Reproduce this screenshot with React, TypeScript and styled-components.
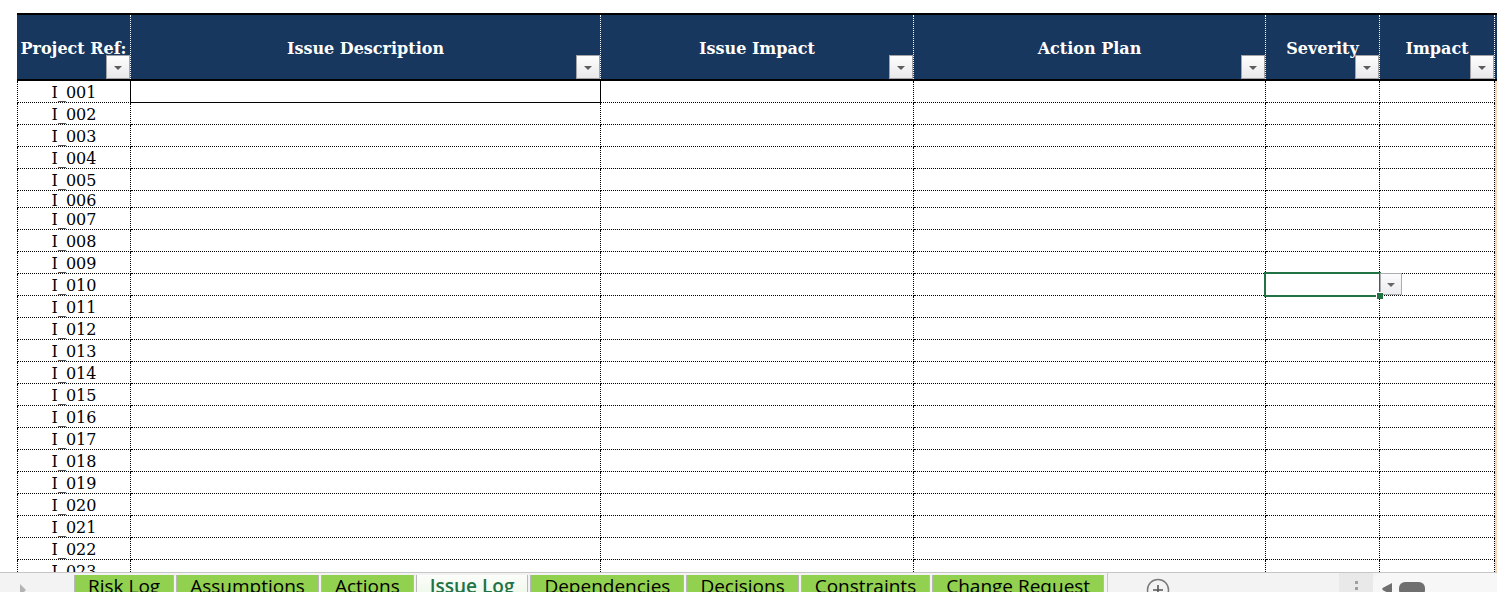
import React from 'react';
import styled, { createGlobalStyle } from 'styled-components';

const GlobalStyle = createGlobalStyle`
  html, body { margin: 0; padding: 0; background: #fff; overflow: hidden; }
  #root { width: 1497px; height: 592px; }
`;

const COLS = '114px 470px 313px 352px 114px 115px 3px';

const Page = styled.div`
  width: 1497px;
  height: 592px;
  display: flex;
  flex-direction: column;
  overflow: hidden;
  background: #fff;
`;

const Sheet = styled.div`
  flex: 1;
  min-height: 0;
  overflow: hidden;
  box-sizing: border-box;
  padding: 13px 0 0 17px;
`;

const HeaderRow = styled.div`
  display: grid;
  grid-template-columns: ${COLS};
  height: 68px;
  box-sizing: border-box;
  border-top: 2px solid #000;
  border-bottom: 2px solid #000;
`;

const HeaderCell = styled.div<{ $edge?: boolean }>`
  position: relative;
  box-sizing: border-box;
  background: #17375e;
  border-right: ${(p) => (p.$edge ? 'none' : '1px dotted #ffffff')};
  display: flex;
  align-items: center;
  justify-content: center;
  padding-top: 2px;
  font: bold 16px 'DejaVu Serif', serif;
  color: #fff;
  white-space: nowrap;
`;

const FilterButton = styled.span`
  position: absolute;
  right: 0;
  bottom: 0;
  width: 24px;
  height: 24px;
  box-sizing: border-box;
  border: 1px solid #a3a3a6;
  background: linear-gradient(#fefefe, #e8e8eb);
  display: flex;
  align-items: center;
  justify-content: center;
  &::after {
    content: '';
    margin-top: 2px;
    border-left: 4px solid transparent;
    border-right: 4px solid transparent;
    border-top: 4px solid #5c5c5c;
  }
`;

const Row = styled.div<{ $h: number }>`
  display: grid;
  grid-template-columns: ${COLS};
  height: ${(p) => p.$h}px;
`;

const Cell = styled.div<{ $first?: boolean; $solidRight?: boolean; $solidBottom?: boolean; $selected?: boolean }>`
  position: ${(p) => (p.$selected ? 'relative' : 'static')};
  box-sizing: border-box;
  border-right: 1px ${(p) => (p.$solidRight ? 'solid' : 'dotted')} #000;
  border-bottom: 1px ${(p) => (p.$solidBottom ? 'solid' : 'dotted')} #000;
  border-left: ${(p) => (p.$first ? '1px dotted #000' : 'none')};
  display: flex;
  align-items: flex-end;
  justify-content: center;
  overflow: ${(p) => (p.$selected ? 'visible' : 'hidden')};
  font: 16px 'DejaVu Serif', serif;
  line-height: 18.6px;
  color: #000;
  white-space: nowrap;
`;

const StripCell = styled.div`
  background: #fcd5b4;
`;

const HeaderStrip = styled.div`
  background: #17375e;
`;

const RefText = styled.span<{ $short?: boolean }>`
  margin-bottom: ${(p) => (p.$short ? '-4px' : '-1px')};
`;

const SelectionBox = styled.div`
  position: absolute;
  top: -2px;
  left: -2px;
  right: -2px;
  bottom: -2px;
  border: 2px solid #217346;
  z-index: 2;
  pointer-events: none;
`;

const FillHandle = styled.div`
  position: absolute;
  right: -4px;
  bottom: -4px;
  width: 6px;
  height: 6px;
  background: #217346;
  border-top: 1px solid #fff;
  border-left: 1px solid #fff;
  z-index: 4;
`;

const CellDropdown = styled.div`
  position: absolute;
  left: calc(100% + 1px);
  top: -1px;
  width: 22px;
  height: 22px;
  box-sizing: border-box;
  border: 1px solid #adadb0;
  background: linear-gradient(#fbfbfd, #ececf0);
  display: flex;
  align-items: center;
  justify-content: center;
  z-index: 3;
  &::after {
    content: '';
    margin-top: 1px;
    border-left: 4px solid transparent;
    border-right: 4px solid transparent;
    border-top: 4px solid #666;
  }
`;

const TabBar = styled.div`
  flex: none;
  height: 20px;
  box-sizing: border-box;
  border-top: 1px solid #c6c6c6;
  background: #f3f3f3;
  display: flex;
  align-items: flex-start;
  overflow: hidden;
`;

const NavArea = styled.div`
  flex: none;
  width: 74px;
  height: 100%;
  display: flex;
  align-items: flex-start;
  padding-left: 20px;
  box-sizing: border-box;
  &::before {
    content: '';
    margin-top: 11px;
    border-top: 6px solid transparent;
    border-bottom: 6px solid transparent;
    border-left: 6px solid #b3b3b3;
  }
`;

const Tabs = styled.div`
  display: flex;
  padding-top: 2px;
`;

const Tab = styled.div<{ $active?: boolean }>`
  height: 24px;
  box-sizing: border-box;
  padding: 0 13px;
  margin-right: 2px;
  border-left: 1px solid #b8b8b8;
  border-right: 1px solid #b8b8b8;
  background: ${(p) => (p.$active ? 'linear-gradient(#fbfdf9, #eef7e8)' : '#92d050')};
  color: ${(p) => (p.$active ? '#217346' : '#000')};
  font: ${(p) => (p.$active ? 600 : 400)} 19px 'Open Sans', sans-serif;
  line-height: 23px;
  white-space: nowrap;
`;

const AddArea = styled.div`
  flex: none;
  height: 100%;
  margin-left: 1px;
  padding: 5px 0 0 38px;
  border-left: 1px solid #c8c8c8;
  box-sizing: border-box;
`;

const RightArea = styled.div`
  margin-left: auto;
  flex: none;
  width: 158px;
  height: 100%;
  display: flex;
`;

const Grip = styled.div`
  width: 34px;
  height: 100%;
  background: #e9e9e9;
  display: flex;
  flex-direction: column;
  align-items: center;
  gap: 3px;
  padding-top: 8px;
  box-sizing: border-box;
`;

const GripDot = styled.span`
  width: 3px;
  height: 3px;
  background: #a0a0a0;
`;

const Track = styled.div`
  flex: 1;
  height: 100%;
  background: #f7f7f7;
  border-top-left-radius: 9px;
  display: flex;
  align-items: flex-start;
  padding: 9px 0 0 8px;
  box-sizing: border-box;
  gap: 6px;
`;

const Thumb = styled.div`
  width: 26px;
  height: 14px;
  border-radius: 6px;
  background: #6f6f6f;
`;

const headers = [
  'Project Ref:',
  'Issue Description',
  'Issue Impact',
  'Action Plan',
  'Severity',
  'Impact',
];

const tabs = [
  'Risk Log',
  'Assumptions',
  'Actions',
  'Issue Log',
  'Dependencies',
  'Decisions',
  'Constraints',
  'Change Request',
];

const rows = Array.from({ length: 24 }, (_, i) => ({
  ref: `I_${String(i + 1).padStart(3, '0')}`,
  h: i === 5 ? 17 : 22,
}));

export default function App() {
  return (
    <Page>
      <GlobalStyle />
      <Sheet>
        <HeaderRow>
          {headers.map((h) => (
            <HeaderCell key={h}>
              {h}
              <FilterButton />
            </HeaderCell>
          ))}
          <HeaderStrip />
        </HeaderRow>
        {rows.map((r, i) => (
          <Row key={r.ref} $h={r.h}>
            <Cell $first $solidRight={i === 0}>
              <RefText $short={r.h < 20}>{r.ref}</RefText>
            </Cell>
            <Cell $solidRight={i === 0} $solidBottom={i === 0} />
            <Cell />
            <Cell />
            <Cell $selected={i === 9}>
              {i === 9 && (
                <>
                  <SelectionBox />
                  <FillHandle />
                  <CellDropdown />
                </>
              )}
            </Cell>
            <Cell />
            <StripCell />
          </Row>
        ))}
      </Sheet>
      <TabBar>
        <NavArea />
        <Tabs>
          {tabs.map((t) => (
            <Tab key={t} $active={t === 'Issue Log'}>
              {t}
            </Tab>
          ))}
        </Tabs>
        <AddArea>
          <svg width="24" height="24" viewBox="0 0 24 24">
            <circle cx="12" cy="12" r="10.5" fill="none" stroke="#7a7a7a" strokeWidth="1.5" />
            <path d="M12 7v10M7 12h10" stroke="#555" strokeWidth="1.6" />
          </svg>
        </AddArea>
        <RightArea>
          <Grip>
            <GripDot />
            <GripDot />
          </Grip>
          <Track>
            <svg width="12" height="14" viewBox="0 0 12 14">
              <path d="M11 1 L11 13 L2 8.2 Q0.5 7 2 5.8 Z" fill="#6f6f6f" />
            </svg>
            <Thumb />
          </Track>
        </RightArea>
      </TabBar>
    </Page>
  );
}
